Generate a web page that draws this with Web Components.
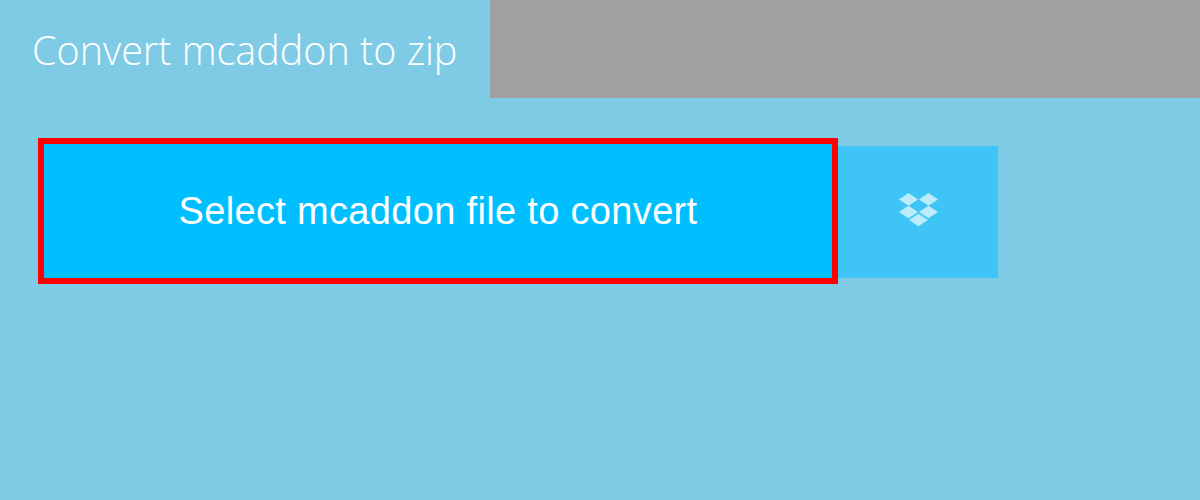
<!DOCTYPE html>
<html>
<head>
<meta charset="utf-8">
<title>Convert mcaddon to zip</title>
<style>
  html, body { margin: 0; height: 100%; background: #7fcbe5; }
</style>
</head>
<body>
<convert-page>
  <page-header title="Convert mcaddon to zip"></page-header>
  <upload-row label="Select mcaddon file to convert"></upload-row>
</convert-page>

<script>
class ConvertPage extends HTMLElement {
  constructor() {
    super();
    this.root = this.attachShadow({ mode: "open" });
    this.root.innerHTML = `
      <style>
        :host {
          display: block;
          width: 1200px;
          height: 500px;
          overflow: hidden;
          background: #7fcbe5;
        }
      </style>
      <slot></slot>
    `;
  }
}

class PageHeader extends HTMLElement {
  constructor() {
    super();
    this.root = this.attachShadow({ mode: "open" });
    this.root.innerHTML = `
      <style>
        :host {
          display: flex;
          height: 98px;
        }
        h1 {
          box-sizing: border-box;
          width: 490px;
          margin: 0;
          padding: 1px 0 0 32px;
          font: 300 39.5px/98px "Open Sans", "Liberation Sans", sans-serif;
          color: #fff;
          white-space: nowrap;
        }
        .ad {
          flex: 1;
          background: #a0a0a0;
        }
      </style>
      <h1></h1>
      <div class="ad"></div>
    `;
  }

  connectedCallback() {
    this.root.querySelector("h1").textContent = this.getAttribute("title");
  }
}

class UploadRow extends HTMLElement {
  constructor() {
    super();
    this.root = this.attachShadow({ mode: "open" });
    this.root.innerHTML = `
      <style>
        :host {
          display: flex;
          align-items: flex-end;
          margin: 40px 0 0 38px;
        }
        button {
          box-sizing: border-box;
          width: 800px;
          height: 146px;
          padding: 0;
          border: 6px solid #ff0000;
          background: #00bfff;
          color: #fff;
          font: 38px "Liberation Sans", Arial, sans-serif;
          letter-spacing: 0.33px;
        }
        .dropbox {
          box-sizing: border-box;
          display: flex;
          align-items: center;
          justify-content: center;
          width: 160px;
          height: 132px;
          margin-bottom: 6px;
          padding-bottom: 4px;
          background: #3fc5f5;
        }
        svg { display: block; }
      </style>
      <button type="button"></button>
      <div class="dropbox">
        <svg width="40" height="34" viewBox="-1 0 40 34" fill="#fff" fill-opacity="0.66">
          <polygon points="0,6.5 9.5,0 19,6.5 9.5,12.8"/>
          <polygon points="20,6.5 29.5,0 39,6.5 29.5,12.8"/>
          <polygon points="0,19 9.5,12.8 19,19 9.5,25.2"/>
          <polygon points="20,19 29.5,12.8 39,19 29.5,25.2"/>
          <polygon points="10,27 19.5,20.8 29,27 19.5,33.2"/>
        </svg>
      </div>
    `;
  }

  connectedCallback() {
    this.root.querySelector("button").textContent = this.getAttribute("label");
  }
}

customElements.define("convert-page", ConvertPage);
customElements.define("page-header", PageHeader);
customElements.define("upload-row", UploadRow);
</script>
</body>
</html>
